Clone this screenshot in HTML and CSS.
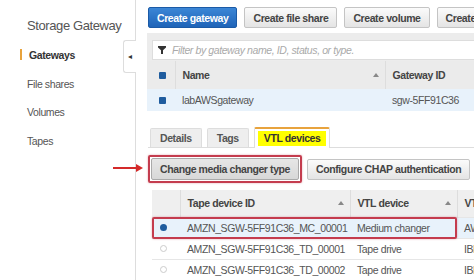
FILE: index.html
```html
<!DOCTYPE html>
<html lang="en">
<head>
    <meta charset="UTF-8">
    <title>Storage Gateway - Gateways</title>
    <link rel="stylesheet" href="styles.css">
</head>
<body>
    <div class="layout">
        <aside class="sidebar">
            <h1>Storage Gateway</h1>
            <nav class="side-nav">
                <a class="active">Gateways</a>
                <a>File shares</a>
                <a>Volumes</a>
                <a>Tapes</a>
            </nav>
            <div class="collapse">&#9666;</div>
        </aside>

        <main class="content">
            <div class="toolbar">
                <button class="btn primary">Create gateway</button>
                <button class="btn">Create file share</button>
                <button class="btn">Create volume</button>
                <button class="btn">Create tapes</button>
            </div>

            <div class="panel">
                <div class="filter">
                    <svg width="8" height="8" viewBox="0 0 8 8"><path d="M0 0h8v1.6L5 4.2V8H3V4.2L0 1.6z" fill="#333"/></svg>
                    <span>Filter by gateway name, ID, status, or type.</span>
                </div>
                <table class="grid gateways">
                    <tr class="head">
                        <th class="check"><span class="box"></span></th>
                        <th class="col-name">Name <span class="sort"></span></th>
                        <th class="col-id">Gateway ID <span class="sort"></span></th>
                    </tr>
                    <tr class="selected">
                        <td class="check"><span class="box"></span></td>
                        <td>labAWSgateway</td>
                        <td>sgw-5FF91C36</td>
                    </tr>
                </table>
            </div>

            <div class="tabs">
                <div class="tab">Details</div>
                <div class="tab">Tags</div>
                <div class="tab active"><span class="mark">VTL devices</span></div>
            </div>

            <div class="actions">
                <span class="arrow"></span>
                <div class="callout">
                    <button class="btn pressed">Change media changer type</button>
                </div>
                <button class="btn">Configure CHAP authentication</button>
            </div>

            <div class="devices-wrap">
                <table class="grid devices">
                    <tr class="head">
                        <th class="radio-col"></th>
                        <th class="col-tape">Tape device ID <span class="sort"></span></th>
                        <th class="col-vtl">VTL device <span class="sort"></span></th>
                        <th>VTL device type</th>
                    </tr>
                    <tr class="selected">
                        <td class="radio-col"><span class="radio on"></span></td>
                        <td>AMZN_SGW-5FF91C36_MC_00001</td>
                        <td>Medium changer</td>
                        <td>AWS-Gateway-VTL</td>
                    </tr>
                    <tr>
                        <td class="radio-col"><span class="radio"></span></td>
                        <td>AMZN_SGW-5FF91C36_TD_00001</td>
                        <td>Tape drive</td>
                        <td>IBM-ULT3580-TD5</td>
                    </tr>
                    <tr>
                        <td class="radio-col"><span class="radio"></span></td>
                        <td>AMZN_SGW-5FF91C36_TD_00002</td>
                        <td>Tape drive</td>
                        <td>IBM-ULT3580-TD5</td>
                    </tr>
                </table>
                <div class="row-callout"></div>
            </div>
        </main>
    </div>
</body>
</html>
```

FILE: styles.css
```css
body {
    margin: 0;
    width: 474px;
    height: 280px;
    overflow: hidden;
    background-color: white;
    font-family: "Liberation Sans", Arial, sans-serif;
    font-size: 10.5px;
    letter-spacing: -0.4px;
    color: #555;
}
.layout {
    display: flex;
    height: 280px;
}
.sidebar {
    position: relative;
    flex: 0 0 135px;
    border-right: 1px solid #ddd;
}
.sidebar h1 {
    margin: 17px 0 0 27px;
    font-size: 13px;
    font-weight: normal;
    color: #555;
    line-height: 18px;
    white-space: nowrap;
}
.side-nav {
    display: flex;
    flex-direction: column;
    margin-top: 12px;
}
.side-nav a {
    display: block;
    height: 28.5px;
    line-height: 16px;
    padding-left: 27px;
    color: #555;
}
.side-nav a.active {
    font-weight: bold;
    color: #333;
    padding-left: 29px;
    position: relative;
}
.side-nav a.active::before {
    content: "";
    position: absolute;
    left: 20px;
    top: 2px;
    width: 2px;
    height: 11px;
    background-color: #e8a33d;
}
.collapse {
    position: absolute;
    right: -1px;
    top: 40px;
    width: 12px;
    height: 31px;
    background: white;
    border: 1px solid #ddd;
    border-right: none;
    border-radius: 3px 0 0 3px;
    font-size: 8px;
    line-height: 31px;
    text-align: center;
    color: #333;
}

.content {
    flex: 0 0 auto;
    width: 420px;
    padding-left: 12px;
}
.toolbar {
    display: flex;
    gap: 7px;
    margin-top: 7px;
    white-space: nowrap;
}
.btn {
    height: 21px;
    padding: 0 8px;
    border: 1px solid #c4c4c4;
    border-radius: 2px;
    background: linear-gradient(#fbfbfb, #e4e4e4);
    font-family: inherit;
    font-size: 10.5px;
    letter-spacing: -0.4px;
    font-weight: bold;
    color: #444;
    white-space: nowrap;
}
.btn.primary {
    border-color: #1b5aa6;
    background: linear-gradient(#3b86d6, #1f64b8);
    color: white;
}
.btn.pressed {
    height: 22px;
    background: linear-gradient(#e6e6e6, #d8d8d8);
    border-color: #aaa;
}

.panel {
    margin-top: 5px;
    margin-left: -1px;
    background-color: #ececec;
    padding-top: 7px;
}
.filter {
    display: flex;
    align-items: center;
    gap: 6px;
    height: 18px;
    margin: 0 0 1px 5px;
    padding-left: 5px;
    background: white;
    border: 1px solid #ddd;
    border-right: none;
    font-style: italic;
    color: #aaa;
    white-space: nowrap;
}
.grid {
    border-collapse: collapse;
    width: 100%;
    table-layout: fixed;
    white-space: nowrap;
}
.grid th,
.grid td {
    box-sizing: border-box;
    padding: 0 0 0 7px;
    text-align: left;
    overflow: hidden;
}
.grid th {
    font-weight: bold;
    color: #444;
    border-left: 1px solid #ddd;
    position: relative;
}
.grid th:first-child {
    border-left: none;
}
.gateways .head {
    height: 28px;
    background-color: #ebebeb;
}
.gateways .selected {
    height: 22px;
    background-color: #e8f2fb;
}
.gateways .check {
    width: 28px;
    padding: 0 0 0 12px;
}
.gateways .col-name {
    width: 210px;
}
.box {
    display: block;
    width: 7px;
    height: 7px;
    border-radius: 1px;
    background-color: #1f5c9e;
}
.sort {
    position: absolute;
    right: 6px;
    top: 50%;
    margin-top: -2px;
    border-left: 3px solid transparent;
    border-right: 3px solid transparent;
    border-bottom: 4px solid #888;
}

.tabs {
    display: flex;
    gap: 5px;
    margin-top: 16px;
    padding-left: 2px;
    border-bottom: 1px solid #ddd;
    height: 20px;
    align-items: flex-end;
}
.tab {
    height: 19px;
    line-height: 19px;
    padding: 0 9px;
    background-color: #eee;
    border: 1px solid #ddd;
    border-bottom: none;
    border-radius: 2px 2px 0 0;
    font-weight: bold;
    color: #555;
    box-sizing: border-box;
}
.tab.active {
    height: 21px;
    margin-bottom: -1px;
    padding: 2px 3px 0;
    line-height: 15px;
    background-color: white;
    border-top: 2px solid #e8a33d;
    color: #333;
}
.mark {
    display: block;
    padding: 0 6px;
    background-color: #ffff00;
}

.actions {
    position: relative;
    display: flex;
    align-items: center;
    gap: 5px;
    margin-top: 7px;
}
.callout {
    display: flex;
    padding: 1px;
    border: 2px solid #c43c4e;
    border-radius: 2px;
    box-shadow: 0 0 2px rgba(196, 60, 78, 0.5);
}
.arrow {
    position: absolute;
    left: -35px;
    top: 12px;
    width: 24px;
    height: 2px;
    background-color: #d42a2a;
}
.arrow::after {
    content: "";
    position: absolute;
    right: -6px;
    top: -3px;
    border-top: 4px solid transparent;
    border-bottom: 4px solid transparent;
    border-left: 7px solid #d42a2a;
}

.devices-wrap {
    position: relative;
    margin-top: 7px;
    margin-left: 4px;
}
.devices .head {
    height: 27px;
    background-color: #efefef;
}
.devices tr {
    height: 21px;
    border-bottom: 1px solid #e6e6e6;
}
.devices .selected {
    background-color: #e8f2fb;
}
.devices .radio-col {
    width: 28px;
    padding-left: 8px;
}
.devices .col-tape {
    width: 170px;
}
.devices .col-vtl {
    width: 107px;
}
.radio {
    display: block;
    width: 7px;
    height: 7px;
    border-radius: 50%;
    border: 1px solid #ccc;
    box-sizing: border-box;
}
.radio.on {
    border: none;
    background-color: #1f5c9e;
}
.row-callout {
    position: absolute;
    left: 0;
    top: 27px;
    width: 305px;
    height: 22px;
    box-sizing: border-box;
    border: 2px solid #c43c4e;
    border-radius: 2px;
    box-shadow: 0 0 2px rgba(196, 60, 78, 0.5);
}
```
